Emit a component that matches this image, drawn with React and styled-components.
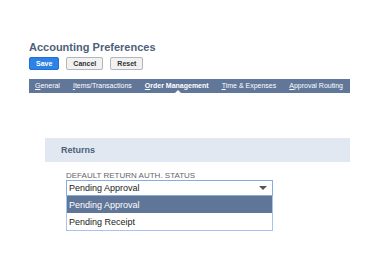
import React from 'react';
import styled, { createGlobalStyle } from 'styled-components';

const GlobalStyle = createGlobalStyle`
  html, body {
    margin: 0;
    padding: 0;
    background: #fff;
  }
  body {
    font-family: "Liberation Sans", Arial, sans-serif;
  }
`;

const Page = styled.div`
  width: 321px;
  padding: 41px 0 0 29px;
`;

const Title = styled.h1`
  margin: 0;
  font-size: 11px;
  line-height: 13px;
  font-weight: bold;
  color: #4d5f79;
`;

const ButtonRow = styled.div`
  display: flex;
  gap: 7px;
  margin-top: 3px;
`;

const Button = styled.button`
  height: 13px;
  padding: 0 6px;
  box-sizing: content-box;
  font-family: inherit;
  font-size: 7px;
  font-weight: bold;
  line-height: 11px;
  border-radius: 2px;
  border: 1px solid ${(p) => (p.$primary ? '#1f6fd6' : '#b5b5b5')};
  background: ${(p) => (p.$primary ? '#2d82e6' : '#f1f1f1')};
  color: ${(p) => (p.$primary ? '#fff' : '#333')};
  height: 11px;
`;

const TabBar = styled.nav`
  display: flex;
  align-items: center;
  gap: 13px;
  height: 14px;
  margin-top: 9px;
  padding-left: 6px;
  background: #607799;
`;

const Tab = styled.span`
  position: relative;
  font-size: 7px;
  line-height: 14px;
  color: #fff;
  white-space: nowrap;
  font-weight: ${(p) => (p.$active ? 'bold' : 'normal')};

  u {
    text-decoration: underline;
  }

  ${(p) =>
    p.$active &&
    `
    &::after {
      content: '';
      position: absolute;
      left: 50%;
      bottom: 0;
      margin-left: -2px;
      border-left: 3px solid transparent;
      border-right: 3px solid transparent;
      border-bottom: 3px solid #fff;
    }
  `}
`;

const Section = styled.section`
  margin: 45px 0 0 16px;
`;

const SectionHeader = styled.div`
  height: 24px;
  display: flex;
  align-items: center;
  padding-left: 16px;
  background: #e2e8f1;
  font-size: 9px;
  font-weight: bold;
  color: #4d5f79;
`;

const Field = styled.div`
  width: 207px;
  margin: 9px 0 0 21px;
`;

const Label = styled.div`
  font-size: 8px;
  line-height: 9px;
  color: #666;
  text-transform: uppercase;
`;

const Select = styled.div`
  height: 14px;
  display: flex;
  align-items: center;
  justify-content: space-between;
  padding: 0 5px 0 2px;
  border: 1px solid #86ace2;
  font-size: 9px;
  color: #222;
`;

const Arrow = styled.span`
  width: 0;
  height: 0;
  border-left: 4px solid transparent;
  border-right: 4px solid transparent;
  border-top: 4px solid #555;
`;

const List = styled.ul`
  margin: 0;
  padding: 0;
  list-style: none;
  border: 1px solid #a7c3ee;
  border-top: none;
`;

const Option = styled.li`
  height: 17px;
  display: flex;
  align-items: center;
  padding-left: 2px;
  font-size: 9px;
  background: ${(p) => (p.$selected ? '#5f7698' : '#fff')};
  color: ${(p) => (p.$selected ? '#fff' : '#222')};
`;

const tabs = [
  { key: 'G', rest: 'eneral' },
  { key: 'I', rest: 'tems/Transactions' },
  { key: 'O', rest: 'rder Management', active: true },
  { key: 'T', rest: 'ime & Expenses' },
  { key: 'A', rest: 'pproval Routing' },
];

export default function App() {
  return (
    <>
      <GlobalStyle />
      <Page>
        <Title>Accounting Preferences</Title>
        <ButtonRow>
          <Button $primary>Save</Button>
          <Button>Cancel</Button>
          <Button>Reset</Button>
        </ButtonRow>
        <TabBar>
          {tabs.map((t) => (
            <Tab key={t.key} $active={t.active}>
              <u>{t.key}</u>
              {t.rest}
            </Tab>
          ))}
        </TabBar>
        <Section>
          <SectionHeader>Returns</SectionHeader>
          <Field>
            <Label>Default Return Auth. Status</Label>
            <Select>
              <span>Pending Approval</span>
              <Arrow />
            </Select>
            <List>
              <Option $selected>Pending Approval</Option>
              <Option>Pending Receipt</Option>
            </List>
          </Field>
        </Section>
      </Page>
    </>
  );
}
